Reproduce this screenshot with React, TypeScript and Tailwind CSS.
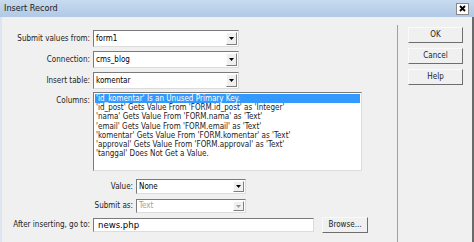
import React from 'react';

const font = { fontFamily: '"DejaVu Sans Condensed", "Liberation Sans", Arial, sans-serif' };

const Arrow: React.FC<{ disabled?: boolean }> = ({ disabled }) => (
  <div className="absolute right-[1px] top-[1px] bottom-[1px] w-[11px] flex items-center justify-center bg-[#f0f0f0] border border-t-[#fdfdfd] border-l-[#fdfdfd] border-r-[#808080] border-b-[#808080]">
    <svg width="5" height="3" viewBox="0 0 5 3">
      <path d="M0 0h5L2.5 3z" fill={disabled ? '#a0a0a0' : '#000'} />
    </svg>
  </div>
);

const Select: React.FC<{ value: string; w: string; h?: string; disabled?: boolean }> = ({ value, w, h = 'h-[17px]', disabled }) => (
  <div className={`relative ${w} ${h} bg-white border border-t-[#7a7a7a] border-l-[#7a7a7a] border-r-[#dcdcdc] border-b-[#dcdcdc] flex items-center pl-[2px] ${disabled ? 'text-[#a0a0a0] bg-[#fafafa]' : 'text-black'}`}>
    {value}
    <Arrow disabled={disabled} />
  </div>
);

const Button: React.FC<{ label: string; w?: string }> = ({ label, w = 'w-[55px]' }) => (
  <div className={`${w} h-[16px] flex items-center justify-center bg-[#f0f0f0] border border-t-[#fafafa] border-l-[#fafafa] border-r-[#6e6e6e] border-b-[#6e6e6e] text-[#222]`}>
    {label}
  </div>
);

const columns = [
  "'id_komentar' Is an Unused Primary Key.",
  "'id_post' Gets Value From 'FORM.id_post' as 'Integer'",
  "'nama' Gets Value From 'FORM.nama' as 'Text'",
  "'email' Gets Value From 'FORM.email' as 'Text'",
  "'komentar' Gets Value From 'FORM.komentar' as 'Text'",
  "'approval' Gets Value From 'FORM.approval' as 'Text'",
  "'tanggal' Does Not Get a Value.",
];

export default function App() {
  return (
    <div className="w-[474px] h-[242px] flex flex-col bg-[#f0f0f0] text-[8px] leading-none overflow-hidden" style={font}>
      {/* title bar */}
      <div className="h-[17px] shrink-0 flex items-center justify-between pl-[4px] pr-[5px] bg-gradient-to-b from-[#c8dbef] to-[#b0c9e6] text-[9px] text-[#1a1a1a]">
        <span>Insert Record</span>
        <div className="w-[13px] h-[12px] bg-white border border-[#8a8a8a] flex items-center justify-center">
          <svg width="7" height="7" viewBox="0 0 7 7">
            <path d="M1 1l5 5M6 1L1 6" stroke="#000" strokeWidth="1.8" />
          </svg>
        </div>
      </div>

      <div className="flex flex-1 border-l-[2px] border-[#dbe6f2] border-r-[2px] border-r-[#6a6a6a]">
        {/* form */}
        <div className="w-[395px] flex flex-col pt-[13px] text-[#222]">
          <div className="flex flex-col gap-[4px]">
            {[
              ['Submit values from:', 'form1'],
              ['Connection:', 'cms_blog'],
              ['Insert table:', 'komentar'],
            ].map(([l, v]) => (
              <div key={l} className="flex items-center">
                <div className="w-[91px] text-right pr-[3px]">{l}</div>
                <Select value={v} w="w-[146px]" />
              </div>
            ))}
          </div>

          <div className="flex mt-[3px]">
            <div className="w-[91px] text-right pr-[3px] pt-[5px]">Columns:</div>
            <div className="w-[269px] h-[79px] overflow-hidden bg-white border border-t-[#7a7a7a] border-l-[#7a7a7a] border-r-[#dcdcdc] border-b-[#dcdcdc] pt-[1px] pl-[1px] pr-[1px]">
              {columns.map((c, i) => (
                <div
                  key={c}
                  className={`h-[9.2px] leading-[9.2px] pl-[1px] whitespace-nowrap ${i === 0 ? 'bg-[#3399ff] text-white' : 'text-[#222]'}`}
                >
                  {c}
                </div>
              ))}
            </div>
          </div>

          <div className="flex flex-col gap-[5px] mt-[8px]">
            <div className="flex items-center">
              <div className="w-[134px] text-right pr-[3px]">Value:</div>
              <Select value="None" w="w-[110px]" h="h-[15px]" />
            </div>
            <div className="flex items-center">
              <div className="w-[134px] text-right pr-[3px]">Submit as:</div>
              <Select value="Text" w="w-[110px]" h="h-[14px]" disabled />
            </div>
          </div>

          <div className="flex items-center mt-[4px]">
            <div className="w-[91px] text-right pr-[3px]">After inserting, go to:</div>
            <div className="w-[221px] h-[14px] bg-white border border-t-[#7a7a7a] border-l-[#7a7a7a] border-r-[#dcdcdc] border-b-[#dcdcdc] flex items-center pl-[4px] text-[9.5px] text-black">
              news.php
            </div>
            <div className="ml-[8px]">
              <Button label="Browse..." w="w-[46px]" />
            </div>
          </div>
        </div>

        {/* buttons */}
        <div className="flex-1 flex mt-[8px] border-l border-[#a0a0a0]">
          <div className="flex flex-col gap-[5px] pl-[10px] pt-[2px]">
            <Button label="OK" />
            <Button label="Cancel" />
            <Button label="Help" />
          </div>
        </div>
      </div>
    </div>
  );
}
